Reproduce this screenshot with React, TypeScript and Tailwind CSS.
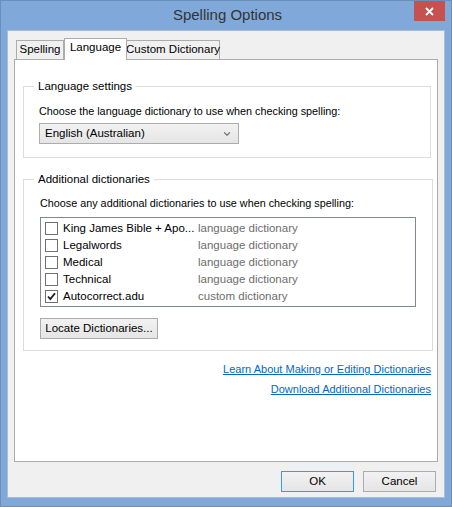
import { ChevronDown } from "lucide-react";

type DictRow = { name: string; kind: string; checked: boolean };

const rows: DictRow[] = [
  { name: "King James Bible + Apo...", kind: "language dictionary", checked: false },
  { name: "Legalwords", kind: "language dictionary", checked: false },
  { name: "Medical", kind: "language dictionary", checked: false },
  { name: "Technical", kind: "language dictionary", checked: false },
  { name: "Autocorrect.adu", kind: "custom dictionary", checked: true },
];

const ui = "font-['Liberation_Sans',Arial,sans-serif]";

function CheckBox({ checked }: { checked: boolean }) {
  return (
    <span className="flex h-[13px] w-[13px] shrink-0 items-center justify-center border border-[#707070] bg-white">
      {checked && (
        <svg width="9" height="9" viewBox="0 0 9 9">
          <path d="M1 4.5 L3.3 7 L8 1.2" fill="none" stroke="#1a1a1a" strokeWidth="1.8" />
        </svg>
      )}
    </span>
  );
}

function Button({ label, focused, className }: { label: string; focused?: boolean; className?: string }) {
  return (
    <button
      className={`flex h-[21px] items-center justify-center border bg-gradient-to-b from-[#f2f2f2] to-[#e5e5e5] text-[11.5px] text-black ${
        focused ? "border-[#3399ff]" : "border-[#acacac]"
      } ${className ?? ""}`}
    >
      {label}
    </button>
  );
}

export default function App() {
  return (
    <div className={`flex h-[507px] w-[452px] flex-col border border-[#6b8fbb] bg-[#80a9d9] ${ui}`}>
      {/* title bar */}
      <div className="flex h-[29px] shrink-0 items-start">
        <div className="flex h-full flex-1 items-center justify-center pl-[40px] text-[15px] text-[#333]">
          Spelling Options
        </div>
        <div className="mr-[6px] flex h-[20px] w-[31px] items-center justify-center bg-[#c75050]">
          <svg width="9" height="9" viewBox="0 0 9 9">
            <path d="M1 1 L8 8 M8 1 L1 8" stroke="white" strokeWidth="1.8" />
          </svg>
        </div>
      </div>

      {/* client */}
      <div className="mx-[6px] flex h-[468px] flex-col border border-[#a9bdd6] bg-[#f0f0f0] px-[6px]">
        {/* tabs */}
        <div className="mt-[7px] flex h-[21px] items-end whitespace-nowrap pl-[2px] text-[11.5px] text-black">
          <div className="flex h-[19px] w-[48px] items-center justify-center border border-b-0 border-[#acacac] bg-[#f0f0f0]">
            Spelling
          </div>
          <div className="relative z-10 -mb-px flex h-[22px] w-[63px] items-center justify-center border border-b-0 border-[#acacac] bg-white pb-[3px]">
            Language
          </div>
          <div className="flex h-[19px] w-[93px] items-center justify-center border border-b-0 border-l-0 border-[#acacac] bg-[#f0f0f0]">
            Custom Dictionary
          </div>
        </div>

        {/* pane */}
        <div className="flex h-[403px] flex-col border border-[#acacac] bg-white pl-[8px] pr-[6px] pt-[19px] text-[10.8px] text-black">
          <fieldset className="h-[79px] border border-[#dcdcdc] px-[15px]">
            <legend className="-ml-[5px] px-[4px] text-[11.5px] leading-[15px]">Language settings</legend>
            <p className="mt-[9px] leading-[16px]">Choose the language dictionary to use when checking spelling:</p>
            <div className="mt-[4px] flex h-[21px] w-[200px] items-center justify-between border border-[#acacac] bg-gradient-to-b from-[#f2f2f2] to-[#e5e5e5] pl-[5px] pr-[6px] text-[11.5px]">
              <span>English (Australian)</span>
              <ChevronDown size={10} strokeWidth={3} className="text-[#7a7a7a]" />
            </div>
          </fieldset>

          <fieldset className="mt-[14px] h-[179px] border border-[#dcdcdc] px-[16px]">
            <legend className="-ml-[6px] px-[4px] text-[11.5px] leading-[15px]">Additional dictionaries</legend>
            <p className="mt-[8px] leading-[16px]">Choose any additional dictionaries to use when checking spelling:</p>
            <div className="mt-[6px] h-[90px] w-[376px] border border-[#828790] bg-white px-[4px] py-[2px] text-[11.5px]">
              {rows.map((r) => (
                <div key={r.name} className="flex h-[17px] items-center whitespace-nowrap">
                  <CheckBox checked={r.checked} />
                  <span className="ml-[5px] w-[135px]">{r.name}</span>
                  <span className="text-[#6d6d6d]">{r.kind}</span>
                </div>
              ))}
            </div>
            <Button label="Locate Dictionaries..." className="mt-[11px] w-[118px]" />
          </fieldset>

          <div className="mt-[11px] flex flex-col items-end gap-[5px] pr-[0px] text-[11px] leading-[15px] text-[#0066cc]">
            <span className="underline">Learn About Making or Editing Dictionaries</span>
            <span className="underline">Download Additional Dictionaries</span>
          </div>
        </div>

        {/* footer */}
        <div className="mt-[9px] flex justify-end gap-[9px] pr-[2px]">
          <Button label="OK" focused className="w-[73px]" />
          <Button label="Cancel" className="w-[73px]" />
        </div>
      </div>
    </div>
  );
}
